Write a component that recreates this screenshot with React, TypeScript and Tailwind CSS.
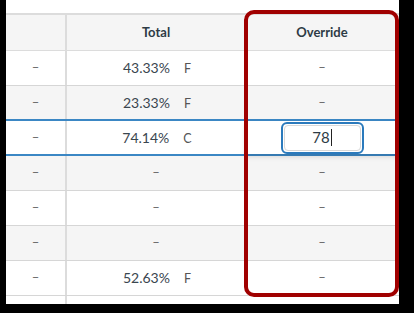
import React from "react";

type Row = { total?: string; grade?: string };

const rows: Row[] = [
  { total: "43.33%", grade: "F" },
  { total: "23.33%", grade: "F" },
  { total: "74.14%", grade: "C" },
  {},
  {},
  {},
  { total: "52.63%", grade: "F" },
];

const Dash = () => <span className="text-[13px] text-[#666]">–</span>;

const App: React.FC = () => {
  return (
    <div
      className="w-[414px] h-[313px] bg-black flex items-start"
      style={{ fontFamily: "Lato, 'Liberation Sans', sans-serif" }}
    >
      <div className="ml-[6px] w-[393px] h-[304px] bg-white relative overflow-hidden pt-[13px]">
        {/* Header */}
        <div className="flex h-[38px] bg-[#f5f5f5] border-t-2 border-b border-[#dcdcdc]">
          <div className="w-[61px] border-r-2 border-[#dcdcdc]"></div>
          <div className="w-[178px] flex items-center justify-center font-bold text-[13px] text-[#2d3b45]">
            Total
          </div>
          <div className="flex-1 flex items-center justify-center font-bold text-[13px] text-[#2d3b45]">
            Override
          </div>
        </div>

        {/* Rows */}
        {rows.map((r, i) => {
          const selected = i === 2;
          const striped = i % 2 === 1;
          const borderB =
            i === 1 || i === 2 ? "border-b-2 border-[#3b87c4]" : "border-b border-[#d6d6d6]";
          return (
            <div
              key={i}
              className={`flex h-[35px] ${borderB} ${striped ? "bg-[#f5f5f5]" : "bg-white"}`}
            >
              <div className="w-[61px] border-r-2 border-[#dcdcdc] flex items-center justify-center">
                <Dash />
              </div>
              <div className="w-[178px] flex items-center justify-center">
                {r.total ? (
                  <span className="flex items-baseline gap-[14px] pl-[2px]">
                    <span className="text-[14px] text-[#3a464f]">{r.total}</span>
                    <span className="text-[12.5px] text-[#555]">{r.grade}</span>
                  </span>
                ) : (
                  <Dash />
                )}
              </div>
              <div
                className={`flex-1 flex items-center justify-center ${
                  selected ? "relative z-10 shadow-[0_3px_5px_rgba(0,0,0,0.12)]" : ""
                }`}
              >
                {selected ? (
                  <div className="w-[83px] h-[32px] rounded-[6px] border-2 border-[#2b7abc] bg-white p-[1px]">
                    <div className="w-full h-full rounded-[4px] border border-[#d8d8d8] flex items-center justify-center">
                      <span className="text-[15px] text-[#2d3b45]">78</span>
                      <span className="w-px h-[17px] bg-[#222] ml-px"></span>
                    </div>
                  </div>
                ) : (
                  <Dash />
                )}
              </div>
            </div>
          );
        })}

        {/* Remaining space */}
        <div className="flex h-[10px]">
          <div className="w-[61px] border-r-2 border-[#dcdcdc]"></div>
        </div>

        {/* Annotation box */}
        <div className="absolute z-20 left-[238px] top-[10px] w-[155px] h-[287px] border-4 border-[#a00000] rounded-[10px]"></div>
      </div>
    </div>
  );
};

export default App;
